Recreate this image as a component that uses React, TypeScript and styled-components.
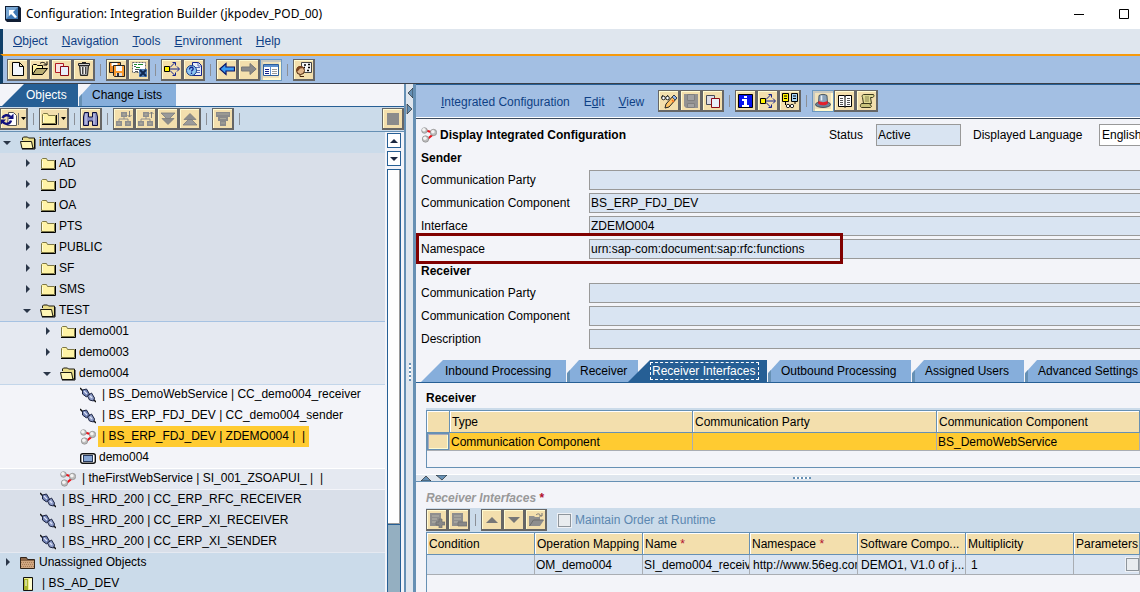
import React from "react";
import styled, { createGlobalStyle, css } from "styled-components";

const GlobalStyle = createGlobalStyle`
  *, *::before, *::after { box-sizing: border-box; }
  body { margin: 0; background: #f3f4f9; }
  button, input, select { font: inherit; color: inherit; }
  ul { list-style: none; margin: 0; padding: 0; }
`;

/* ---------- icons, each on a 16 x 16 grid ---------- */

const Svg = styled.svg`
  display: block;
  flex: none;
`;

const nodesMark = (
  <>
    <path d="M5 3.500l5 1.500M12.500 7l-6 5" stroke="#f01018" strokeWidth="2.200" />
    {[[3.5, 3.5], [12.5, 5.5], [4.5, 12]].map(([cx, cy], i) => (
      <g key={i}>
        <circle cx={cx} cy={cy} r={i === 0 ? 2.8 : 3.2} fill="#bdbdbd" stroke="#8a8a8a" strokeWidth=".7" />
        <circle cx={cx - 0.6} cy={cy - 0.7} r="1.800" fill="#f4f4f4" />
      </g>
    ))}
  </>
);

const hierarchy = (
  <>
    <path d="M5 1h6v5H5zM0 10h6v5H0zM9 10h6v5H9z" fill="#8e8e8e" />
    <path d="M6.500 2.500h3v2h-3zM1.500 11.500h3v2h-3zM10.500 11.500h3v2h-3z" fill="#a9a698" />
    <path d="M8 6v2M3 10V8h9v2" fill="none" stroke="#8e8e8e" />
  </>
);

const icons: Record<string, React.ReactNode> = {
  app: (
    <>
      <path d="M0 0h14l2 2v14H2l-2-2z" fill="#101d33" />
      <path d="M1 1h12v12H1z" fill="#3f78b4" />
      <path d="M1 1h12L1 13z" fill="#79a7d3" />
      <path d="M4 4h6L8 6l4 5-2 1-4-4-2 2z" fill="#fff" />
    </>
  ),
  page: <path d="M2.500 1.500h7l4 4v9h-11zM9.500 1.500v4h4" fill="#f1f5fc" stroke="#000" />,
  open: (
    <>
      <path d="M.5 13.500v-9l1-1h3l1 1h5v3" fill="#fff3a5" stroke="#000" />
      <path d="M.5 13.500l4-6h11l-5 6z" fill="#b9ad72" stroke="#000" />
      <path d="M8 2.500c2-2 5-1 6 1M15 .5v3.500h-3.500" fill="none" stroke="#000" />
    </>
  ),
  copy: (
    <>
      <path d="M1.500 2.500h8v9h-8z" fill="#dcdce6" stroke="#444a58" />
      <path d="M6.500 5.500h8v9h-8z" fill="#e8effa" stroke="#8c0a14" />
    </>
  ),
  copyRed: (
    <>
      <path d="M1.500 2.500h8v9h-8z" fill="#f7e3e3" stroke="#b01a24" />
      <path d="M6.500 5.500h8v9h-8z" fill="#e8effa" stroke="#8c0a14" />
    </>
  ),
  trash: (
    <>
      <path d="M3.500 4.500h9l-1 10h-7z" fill="#9a9a9a" stroke="#222" />
      <path d="M2.500 2.500h11v2h-11z" fill="#ccc" stroke="#222" />
      <path d="M6 1.500h4" stroke="#222" />
      <path d="M6.500 6v7M9.500 6v7" stroke="#444" />
      <path d="M5.500 6v7M8.500 6v7" stroke="#eee" />
    </>
  ),
  saveAll: (
    <>
      <path d="M.5 1.500h11v10H.5z" fill="#f08b28" stroke="#222" />
      <path d="M2.500 2h6v3h-6z" fill="#fff" />
      <path d="M4.500 4.500h11v11h-10l-1-1z" fill="#f79a30" stroke="#222" />
      <path d="M7 5h6v5H7z" fill="#f4f6fa" />
      <path d="M7 12h6v3H7z" fill="#ddd" />
      <path d="M8 12h2v3H8z" fill="#333" />
    </>
  ),
  cancelEdit: (
    <>
      <path d="M1.500 1.500h13v10h-13z" fill="#fff" stroke="#666" strokeDasharray="2 1" />
      <path d="M3 3.500h3M7 3.500h5M5 6.500h4" stroke="#1b8c2c" />
      <path d="M3 5.500h2M4 8.500h4M4 10.500h3" stroke="#555" />
      <path d="M8 8h8v8H8z" fill="#5583bb" />
      <path d="M9 9l6 6M15 9l-6 6" stroke="#0f2850" strokeWidth="2" />
    </>
  ),
  spread: (
    <>
      <path d="M6 8h9M6 6.500l5-5M6 9.500l5 5M8.500 1.500h3v3M8.500 14.500h3v-3M13 5.500L15.500 8 13 10.500" fill="none" stroke="#13218c" />
      <path d="M.5 5.500h5v5h-5z" fill="#fff200" stroke="#000" />
    </>
  ),
  help: (
    <>
      <path d="M6.500 1.500h6l3 3v10h-9z" fill="#e9eef8" stroke="#13218c" />
      <path d="M12 1.500v3.500h3M9 6.500h5M10 9.500h4M10 11.500h4" stroke="#5a6fb8" />
      <circle cx="5.500" cy="9.500" r="5" fill="#8cc6f4" stroke="#153e86" />
      <path d="M3.500 8.500c0-3.500 4.500-2.500 3.500 0C6.700 9.300 5.500 9.500 5.500 10.500M5.500 11.500v1.500" fill="none" stroke="#13218c" strokeWidth="1.300" />
    </>
  ),
  back: <path d="M.8 8L7 2.500v3.500h8.500v4H7v3.500z" fill="#3a9bf2" stroke="#0a1466" strokeWidth="1.200" />,
  forward: <path d="M15.200 8L9 2.500v3.500H.5v4H9v3.500z" fill="#8a8a8a" stroke="#777" />,
  layout: (
    <>
      <path d="M.5 2.500h15v11H.5z" fill="#fff" stroke="#2b5d9c" />
      <path d="M1 3h14v2H1z" fill="#5b8fce" />
      <path d="M2 7.500h4M2 9.500h4M2 11.500h4" stroke="#13218c" />
      <path d="M7.500 5v8" stroke="#5b8fce" />
      <path d="M9 7.500h5M9 9.500h5M9 11.500h5" stroke="#9a9a9a" />
    </>
  ),
  user: (
    <>
      <path d="M5.500 1.500h10v10h-10z" fill="#f6f6f6" stroke="#444" />
      <path d="M8 4h2M12 3.500h2M8 6.500h1M12 6.500h2M11 9.500h2" stroke="#000" strokeWidth="1.600" />
      <circle cx="4.500" cy="9.500" r="4" fill="#e2b68a" stroke="#4a2408" />
      <path d="M.6 10C0 4 6 4 8 7L4 7.500 2 10z" fill="#7b4420" />
      <path d="M4 13.500V15.500h4" stroke="#4a2408" />
    </>
  ),
  refresh: (
    <>
      <path d="M7.500 1.500h5l3 3v10h-9z" fill="#fff" stroke="#555" />
      <path d="M9.500 6C7 3 2.500 4 1.500 7M1.500 10.500c3 4 7.500 2.500 8.500-1" fill="none" stroke="#10107e" strokeWidth="2.500" />
      <path d="M7 8h5.500V2.500zM0 8.500h5l-5 5z" fill="#10107e" />
    </>
  ),
  folder: (
    <>
      <path d="M1.500 12.500v-9l1-1h4l1 2h7v8z" fill="#fff3a5" stroke="#7e7846" />
      <path d="M1 13.500h14.500V4" fill="none" stroke="#000" />
      <path d="M2.500 11V5" stroke="#fffde0" />
    </>
  ),
  folderOpen: (
    <>
      <path d="M2.500 5V3l1-1h4l1 1h6v10h-12" fill="#e9dd8b" stroke="#1c1b10" />
      <path d="M.5 6.500h11l1.500 7H2z" fill="#fff6b5" stroke="#1c1b10" />
      <path d="M15 4v10H2" fill="none" stroke="#000" />
    </>
  ),
  folderBrown: (
    <>
      <path d="M.5 13.500v-11h6l1 2h7v9z" fill="#8d6748" stroke="#33251b" />
      <path d="M1 6h13v7H1z" fill="#d0a680" />
      <path d="M1 7.500h13M2 9.500h12M1 11.500h13" stroke="#a87d58" strokeDasharray="1 1" />
    </>
  ),
  binoculars: (
    <>
      <path d="M.5 14.500V6l1-4.500h4V6h4V1.500h4l1 4.500v8.500h-5V10h-4v4.500z" fill="#8b8fc4" stroke="#0b0b3a" />
      <path d="M3 3v10M11 3v10" stroke="#d4d6f0" />
    </>
  ),
  treeDown: <>{hierarchy}<path d="M13.500 0v6M11.500 4l2 2 2-2" fill="none" stroke="#7c7c7c" /></>,
  treeUp: <>{hierarchy}<path d="M13.500 7V1M11.500 3l2-2 2 2" fill="none" stroke="#7c7c7c" /></>,
  allDown: (
    <>
      <path d="M1 2h14l-6 6H7z" fill="#9a9a9a" stroke="#7c7c7c" strokeWidth=".8" />
      <path d="M2 7.500h12l-6 6z" fill="#8c8c8c" stroke="#7c7c7c" strokeWidth=".8" />
    </>
  ),
  allUp: (
    <>
      <path d="M1 14h14L9 8H7z" fill="#9a9a9a" stroke="#7c7c7c" strokeWidth=".8" />
      <path d="M2 8.500h12l-6-6z" fill="#8c8c8c" stroke="#7c7c7c" strokeWidth=".8" />
    </>
  ),
  filter: (
    <>
      <path d="M1 1h14v5h-2v4h-2v5H5v-5H3V6H1z" fill="#8a8a8a" />
      <path d="M2 3h12M5 7.500h6M6 12h4" stroke="#a9a79c" />
    </>
  ),
  stop: <path d="M2 2h12v12H2z" fill="#8b8b8b" />,
  edit: (
    <>
      <path d="M0 5l2-3M5 5l2-3" stroke="#222" />
      <circle cx="2.500" cy="5" r="1.800" fill="#fff" stroke="#222" />
      <circle cx="6.500" cy="5" r="1.800" fill="#fff" stroke="#222" />
      <path d="M13 2l3 3-8 9-4 1 1-4z" fill="#ffc566" stroke="#222" />
      <path d="M13 2l3 3-2 2-3-3z" fill="#8db4ec" stroke="#222" strokeWidth=".7" />
      <path d="M11 7l2 2" stroke="#f36b1c" strokeWidth="1.500" />
    </>
  ),
  save: (
    <>
      <path d="M1 1h14v14H3l-2-2z" fill="#929292" />
      <path d="M4.500 1.500h7v6h-7zM4.500 10.500h7v4h-7z" fill="#a1a1a1" stroke="#808080" />
    </>
  ),
  info: (
    <>
      <path d="M.5 1.500h14v13H.5z" fill="#0310ef" stroke="#000" />
      <path d="M6 3h3v2H6zM4 6h5v6h2v2H4v-2h2V8H4z" fill="#fff" />
    </>
  ),
  display: (
    <>
      <path d="M.5 .5h6v8h-6z" fill="#fff200" stroke="#000" />
      <path d="M9.500 .5h6v8h-6z" fill="#a6d3f6" stroke="#000" />
      <path d="M2 3h3M2 5.500h3M11 3h3M11 5.500h3M3.500 9v3M13 9v2" stroke="#000" />
      <circle cx="6" cy="13" r="1.700" fill="#fff" stroke="#222" />
      <circle cx="10" cy="13" r="1.700" fill="#fff" stroke="#222" />
    </>
  ),
  hat: (
    <>
      <ellipse cx="8" cy="11.500" rx="7.600" ry="3" fill="#6b8098" stroke="#1d2c3c" strokeWidth=".7" />
      <path d="M4 2.500c2-1.500 6-1.500 8 0l.5 7.500c-3 2-6 2-9 0z" fill="#8ba3ba" stroke="#1d2c3c" strokeWidth=".7" />
      <path d="M3.500 8c3 1.500 6 1.500 9 0l.3 2.800c-3 2-6.500 2-9.600 0z" fill="#e3202c" />
      <path d="M6.500 2.500v5" stroke="#e6eef5" strokeWidth="1.600" />
    </>
  ),
  book: (
    <>
      <path d="M1.500 2.500h6l.5 1 .5-1h6v11h-6l-.5 1-.5-1h-6z" fill="#fff" stroke="#000" />
      <path d="M8 3v11" stroke="#000" />
      <path d="M3 5.500h3M3 7.500h3M3 9.500h3M3 11.500h3M10 5.500h3M10 7.500h3M10 9.500h3M10 11.500h3" stroke="#555" />
    </>
  ),
  scroll: (
    <>
      <path d="M4.500 1.500h10c1 1 0 3-1 3h-2l1 6h-8l-1-6c-1-1 0-3 1-3z" fill="#ded993" stroke="#3b391c" />
      <path d="M2.500 10.500h8l2 3-1 1h-9c-2-1-1-3 0-4z" fill="#c9c37c" stroke="#3b391c" />
      <path d="M6 4h4M6 6h4M6 8h4" stroke="#8b8650" />
    </>
  ),
  rowAdd: (
    <>
      <path d="M1 1h11v13H1z" fill="#8e8e8e" />
      <path d="M3 4h7M3 7h5M3 10h4" stroke="#b8b6ab" />
      <path d="M10 7h3v3h3v3h-3v3h-3v-3H7v-3h3z" fill="#888" stroke="#6d6d6d" strokeWidth=".7" />
    </>
  ),
  rowRemove: (
    <>
      <path d="M1 1h11v13H1z" fill="#8e8e8e" />
      <path d="M3 4h7M3 7h7M3 10h4" stroke="#b8b6ab" />
      <path d="M7 10h9v4H7z" fill="#888" stroke="#6d6d6d" strokeWidth=".7" />
    </>
  ),
  up: <path d="M8 5l6 6H2z" fill="#777" />,
  down: <path d="M8 11L2 5h12z" fill="#777" />,
  openGrey: (
    <>
      <path d="M1 14V4h5l1 1h5v3h4l-4 6z" fill="#8e8e8e" />
      <path d="M1.500 14l4-6h10" fill="none" stroke="#6d6d6d" />
      <path d="M8 3c2-2 4-1 5 1M11 4h3V1" fill="none" stroke="#777" />
    </>
  ),
  channel: (
    <>
      <path d="M0 1l4 4M12 11l4 4" stroke="#111" strokeWidth="1.500" />
      <path d="M2.500 3l4-1 3 5-3 3-4-3z" fill="#7181b4" stroke="#1b2340" />
      <path d="M7.500 9l4-3 3 5-1 3-4-1z" fill="#8e9cc8" stroke="#1b2340" />
      <path d="M4 4l3 3M10 9l2 2" stroke="#dce2f5" strokeWidth="1.300" />
    </>
  ),
  nodes: nodesMark,
  scenario: (
    <>
      <rect x=".7" y="3.700" width="14.600" height="9.600" rx="2" fill="#fff" stroke="#111" strokeWidth="1.400" />
      <rect x="3.500" y="5.500" width="9" height="6" fill="#86a5d3" stroke="#26375a" />
    </>
  ),
  system: (
    <>
      <path d="M3.500 1.500h9v13h-9z" fill="#f1ee8d" stroke="#111" />
      <path d="M4 3h4v11H4z" fill="#a9b52c" />
      <path d="M5 5h2M5 7h2M5 9h2" stroke="#fff" />
      <path d="M9 3h3v10H9z" fill="#fffdd1" />
    </>
  ),
};

const Icon = ({ name }: { name: string }) => (
  <Svg width="16" height="16" viewBox="0 0 16 16" fill="none" aria-hidden="true">
    {icons[name]}
  </Svg>
);

/* ---------- window frame ---------- */

const Window = styled.div`
  display: flex;
  flex-direction: column;
  height: 100vh;
  overflow: hidden;
  font: 12px/16px "Liberation Sans", Arial, sans-serif;
  color: #000;
  white-space: nowrap;
`;

const TitleBar = styled.header`
  display: flex;
  align-items: center;
  height: 29px;
  padding: 0 10px 2px 5px;
  gap: 5px;
  background: #fff;
`;

const WindowTitle = styled.h1`
  flex: 1;
  margin: 0;
  font: 12px/18px "Noto Sans", "Open Sans", sans-serif;
`;

const CaptionButton = styled.button`
  display: flex;
  padding: 0;
  margin-left: 28px;
  border: 0;
  background: none;
`;

const MenuBar = styled.nav`
  display: flex;
  align-items: center;
  gap: 14px;
  height: 25px;
  padding: 0 0 2px 10px;
  border-left: 3px solid #0f3f68;
  background: #dfe6ee;
`;

const MenuItem = styled.button`
  padding: 0;
  border: 0;
  background: none;
  color: #0f3f85;
`;

const Mnemonic = styled.span`
  text-decoration: underline;
`;

const MainToolbar = styled.div`
  display: flex;
  align-items: center;
  height: 30px;
  padding-left: 4px;
  border-left: 3px solid #0f3f68;
  border-top: 2px solid #f79a0c;
  border-bottom: 1px solid #3b3f48;
  background: #a3bfe3;
`;

const Separator = styled.span`
  width: 1px;
  height: 12px;
  margin: 0 5px;
  background: #8b8f96;
`;

const ToolButton = styled.button<{ $active?: boolean; $width?: number }>`
  display: flex;
  align-items: center;
  justify-content: center;
  flex: none;
  width: ${(p) => p.$width || 22}px;
  height: 22px;
  padding: 0;
  border: solid #666;
  border-width: 1px 2px 2px 1px;
  background: #f3dfad;
  box-shadow: inset 1px 1px #fffbd2;
  ${(p) => p.$active && css`
    border: 1px solid #6c98c0;
    background: #f0e2bc;
    box-shadow: inset 2px 2px #c9c9c0, inset -2px -2px #fff9cf;
  `}
`;

const DropMark = styled.span`
  display: flex;
  align-items: center;
  height: 12px;
  margin-left: 1px;
  padding-left: 2px;
  border-left: 1px solid #777;
`;

const DropArrow = () => (
  <DropMark>
    <Svg width="5" height="3" viewBox="0 0 5 3" aria-hidden="true"><path d="M0 0h5L2.500 3z" fill="#000" /></Svg>
  </DropMark>
);

type Tool = string | null;

const Tools = ({ items, active }: { items: Tool[]; active?: string }) => (
  <>
    {items.map((name, i) =>
      name === null ? (
        <Separator key={i} />
      ) : (
        <ToolButton key={i} aria-label={name} $active={name === active}>
          <Icon name={name} />
        </ToolButton>
      )
    )}
  </>
);

const Panes = styled.main`
  display: grid;
  grid-template-columns: 406px 7px minmax(0, 1fr);
  flex: 1;
  min-height: 0;
`;

/* ---------- tabs ---------- */

const TabStrip = styled.div<{ $indent: number }>`
  display: flex;
  flex: none;
  height: 23px;
  padding-left: ${(p) => p.$indent}px;
  border-bottom: 1px solid #265f95;
`;

const Tab = styled.button<{ $width: number; $active?: boolean; $first?: boolean; $overlap?: boolean }>`
  flex: none;
  width: ${(p) => p.$width}px;
  margin: 0 0 0 ${(p) => (p.$overlap ? -10 : 1)}px;
  padding: 0 10px 0 ${(p) => (p.$active || p.$first ? 24 : 13)}px;
  border: 0;
  text-align: left;
  background: ${(p) =>
    p.$first
      ? "#86aedb"
      : "linear-gradient(#6690b4, #6690b4) left bottom / 3px 12px no-repeat, #86aedb"};
  clip-path: ${(p) =>
    p.$first || p.$active
      ? "polygon(0 100%, 22px 0, 100% 0, 100% 100%)"
      : "polygon(0 60%, 12px 0, 100% 0, 100% 100%, 0 100%)"};
  ${(p) => p.$active && css`
    background: #265f95;
    color: #fff;
    z-index: 1;
  `}
`;

const FocusLabel = styled.span`
  display: block;
  width: 109px;
  height: 18px;
  margin-left: -2px;
  padding: 0 1px;
  border: 1px dashed #fff;
`;

/* ---------- object tree ---------- */

const Side = styled.section`
  display: flex;
  flex-direction: column;
  min-height: 0;
  border-right: 2px solid #6690b4;
  background: #f3f4f9;
`;

const TreeToolbar = styled.div`
  display: flex;
  align-items: center;
  flex: none;
  height: 25px;
  border-bottom: 1px solid #6690b4;
  background: #cbdbea;
`;

const Spacer = styled.span`
  flex: 1;
`;

const TreeArea = styled.div`
  display: flex;
  flex: 1;
  min-height: 0;
`;

const Tree = styled.ul`
  flex: 1;
  min-width: 0;
  overflow: hidden;
  background: #d9dfe9;
`;

const levelColors = ["#cbdbea", "#d9dfe9", "#e5e9f1", "#f3f4f9"];

const Row = styled.li<{ $level: number; $edge?: string }>`
  display: flex;
  align-items: center;
  height: 21px;
  padding-left: ${(p) => p.$level * 20}px;
  background: ${(p) => levelColors[p.$level]};
  box-shadow: inset 0 1px ${(p) => p.$edge || levelColors[p.$level]};
`;

const Twisty = styled.span`
  width: 20px;
  padding-left: 3px;
`;

const RowLabel = styled.span<{ $path?: boolean; $selected?: boolean }>`
  height: 21px;
  margin-left: 2px;
  padding: 2px ${(p) => (p.$path ? 4 : 1)}px;
  white-space: pre;
  background: ${(p) => (p.$selected ? "#ffcb31" : "transparent")};
`;

const Arrow = ({ open }: { open: boolean }) => (
  <Svg width="9" height="9" viewBox="0 0 9 9" aria-hidden="true">
    <path d={open ? "M0 3h8L4 7z" : "M3 0v8l4-4z"} fill="#2a3648" />
  </Svg>
);

interface Item {
  level: number;
  icon: string;
  text: string;
  open?: boolean;
  edge?: string;
  selected?: boolean;
}

const items: Item[] = [
  { level: 0, icon: "folderOpen", text: "interfaces", open: true },
  { level: 1, icon: "folder", text: "AD", open: false },
  { level: 1, icon: "folder", text: "DD", open: false },
  { level: 1, icon: "folder", text: "OA", open: false },
  { level: 1, icon: "folder", text: "PTS", open: false },
  { level: 1, icon: "folder", text: "PUBLIC", open: false },
  { level: 1, icon: "folder", text: "SF", open: false },
  { level: 1, icon: "folder", text: "SMS", open: false },
  { level: 1, icon: "folderOpen", text: "TEST", open: true },
  { level: 2, icon: "folder", text: "demo001", open: false, edge: "#a6c2e2" },
  { level: 2, icon: "folder", text: "demo003", open: false },
  { level: 2, icon: "folderOpen", text: "demo004", open: true },
  { level: 3, icon: "channel", text: "| BS_DemoWebService | CC_demo004_receiver", edge: "#c3d6ea" },
  { level: 3, icon: "channel", text: "| BS_ERP_FDJ_DEV | CC_demo004_sender" },
  { level: 3, icon: "nodes", text: "| BS_ERP_FDJ_DEV | ZDEMO004 |  |", selected: true },
  { level: 3, icon: "scenario", text: "demo004" },
  { level: 2, icon: "nodes", text: "| theFirstWebService | SI_001_ZSOAPUI_ |  |", edge: "#fff" },
  { level: 1, icon: "channel", text: "| BS_HRD_200 | CC_ERP_RFC_RECEIVER", edge: "#f3f4f9" },
  { level: 1, icon: "channel", text: "| BS_HRD_200 | CC_ERP_XI_RECEIVER" },
  { level: 1, icon: "channel", text: "| BS_HRD_200 | CC_ERP_XI_SENDER" },
  { level: 0, icon: "folderBrown", text: "Unassigned Objects", open: false, edge: "#e5e9f1" },
  { level: 0, icon: "system", text: "| BS_AD_DEV" },
];

const ScrollBar = styled.div`
  display: flex;
  flex-direction: column;
  align-items: stretch;
  gap: 3px;
  width: 19px;
  padding: 1px 3px 0 2px;
  background: #f3f4f9;
`;

const ScrollStep = styled.button`
  display: flex;
  align-items: center;
  justify-content: center;
  flex: none;
  height: 15px;
  padding: 0;
  border: 1px solid #265f95;
  background: #fff;
`;

const ScrollTrack = styled.div`
  flex: 1;
  border: 1px solid #265f95;
  border-bottom: 0;
  background: #94afc1;
`;

const ScrollThumb = styled.div`
  height: 84%;
  border: solid #9a9a9a;
  border-width: 0 1px 1px 0;
  background: #fff;
  box-shadow: 0 1px #265f95;
`;

/* ---------- pane splitters ---------- */

const SideSplitter = styled.div`
  display: flex;
  flex-direction: column;
  align-items: center;
  gap: 249px;
  padding: 4px 0 0;
  background: #dfe6ee;
`;

const SplitArrows = styled.div`
  display: grid;
  gap: 6px;
`;

const dots = "repeating-linear-gradient(VAR, #6690b4 0 2px, #fff 2px 4px)";

const SideGrip = styled.span`
  width: 2px;
  height: 18px;
  background: ${dots.replace("VAR", "to bottom")};
`;

const RowSplitter = styled.div`
  display: flex;
  align-items: center;
  flex: none;
  gap: 16px;
  height: 8px;
  padding-left: 4px;
  border-top: 1px solid #fff;
  border-bottom: 1px solid #6690b4;
  background: #dfe6ee;
`;

const RowGrip = styled.span`
  width: 18px;
  height: 2px;
  margin: 0 auto;
  background: ${dots.replace("VAR", "to right")};
`;

/* ---------- configuration editor ---------- */

const Editor = styled.section`
  display: flex;
  flex-direction: column;
  min-width: 0;
  overflow: hidden;
  border-left: 3px solid #6690b4;
  background: #f3f4f9;
`;

const EditorBar = styled.div`
  display: flex;
  align-items: center;
  flex: none;
  height: 35px;
  padding-left: 25px;
  border-bottom: 1px solid #3b4a5c;
  box-shadow: inset 0 -1px #fff, inset 0 1px #265f95;
  background: #a3bfe3;
`;

const EditorMenu = styled.nav`
  display: flex;
  gap: 14px;
  width: 217px;
  padding-top: 2px;
`;

const Head = styled.div`
  display: flex;
  align-items: center;
  flex: none;
  height: 30px;
  margin-top: 1px;
  padding-left: 5px;
  overflow: hidden;
`;

const HeadTitle = styled.h2`
  flex: none;
  width: 389px;
  margin: 0 0 0 3px;
  font: bold 12px/16px "Liberation Sans", Arial, sans-serif;
`;

const StatusLabel = styled.label`
  flex: none;
  width: 35px;
`;

const StatusField = styled.input`
  flex: none;
  width: 85px;
  height: 22px;
  margin: 0 12px;
  padding: 0 1px;
  border: 1px solid #999;
  background: #d9e4f2;
`;

const LanguageLabel = styled.label`
  flex: none;
  width: 114px;
  margin-right: 12px;
`;

const LanguageSelect = styled.select`
  flex: none;
  width: 120px;
  height: 22px;
  padding: 0 2px;
  border: 1px solid #999;
  appearance: none;
  background: #fff;
`;

const Caption = styled.h3<{ $inset?: boolean }>`
  flex: none;
  margin: 0;
  padding-left: ${(p) => (p.$inset ? 10 : 5)}px;
  font: bold 12px/16px "Liberation Sans", Arial, sans-serif;
`;

const TabCaption = styled(Caption)`
  margin-top: 7px;
`;

const Fields = styled.div`
  position: relative;
  display: grid;
  flex: none;
  gap: 3px;
  padding: 4px 0;
`;

const FieldRow = styled.div`
  display: flex;
  align-items: center;
  height: 20px;
  padding-left: 5px;
`;

const FieldLabel = styled.label`
  flex: none;
  width: 168px;
`;

const FieldInput = styled.input`
  flex: 1;
  min-width: 0;
  height: 20px;
  padding: 0 1px;
  border: 1px solid #999;
  border-right: 0;
  background: #d9e4f2;
`;

const Highlight = styled.span`
  position: absolute;
  left: 0;
  bottom: -1px;
  width: 427px;
  height: 31px;
  border: 3px solid #800000;
  pointer-events: none;
`;

const Field = ({ id, label, value = "" }: { id: string; label: string; value?: string }) => (
  <FieldRow>
    <FieldLabel htmlFor={id}>{label}</FieldLabel>
    <FieldInput id={id} readOnly value={value} />
  </FieldRow>
);

const EditorTabs = styled(TabStrip)`
  margin-top: 7px;
`;

const TableFrame = styled.div`
  flex: none;
  height: 58px;
  margin: 4px 0 6px 10px;
  border: solid #6690b4;
  border-width: 1px 0 1px 1px;
  box-shadow: 0 -2px #cbdbea;
`;

const Table = styled.table`
  width: 100%;
  table-layout: fixed;
  border-collapse: separate;
  border-spacing: 0;
`;

const Th = styled.th<{ $width?: number }>`
  width: ${(p) => (p.$width ? `${p.$width}px` : "auto")};
  height: 22px;
  padding: 0 0 0 2px;
  overflow: hidden;
  text-align: left;
  font-weight: normal;
  border-right: 1px solid #6690b4;
  border-bottom: 1px solid #6690b4;
  background: #f3dfad;
  box-shadow: inset 1px 1px #fff;
`;

const Td = styled.td<{ $selected?: boolean; $pad?: number }>`
  height: ${(p) => (p.$selected ? 18 : 20)}px;
  padding: 0 0 0 ${(p) => p.$pad || 1}px;
  overflow: hidden;
  border-right: 1px solid #a9adb3;
  border-bottom: 1px solid #a9adb3;
  background: ${(p) => (p.$selected ? "#ffcb31" : "#d9e4f2")};
`;

const RowSelector = styled.button`
  display: block;
  width: 22px;
  height: 17px;
  padding: 0;
  border: 1px solid #6690b4;
  background: #f3dfad;
  box-shadow: inset 1px 1px #aab, inset -1px -1px #fffbd2;
`;

const SelectorCell = styled(Td)`
  padding: 0;
  background: #f3dfad;
`;

const DisabledTitle = styled(Caption)`
  margin: 8px 0 2px;
  color: #999;
  font-style: italic;
`;

const Required = styled.span`
  color: #b0102c;
  font-style: normal;
`;

const TableToolbar = styled.div`
  display: flex;
  align-items: center;
  flex: none;
  height: 24px;
  margin-left: 10px;
  background: #cbdbea;
`;

const CheckLabel = styled.label`
  display: flex;
  align-items: center;
  gap: 4px;
  margin-left: 11px;
  color: #5b87b0;
`;

const CheckBox = styled.input`
  appearance: none;
  width: 13px;
  height: 13px;
  margin: 0;
  border: 1px solid #8e959c;
  outline: 1px solid #eef1f6;
  background: #e9ecef;
`;

const ParamCheck = styled(CheckBox)`
  display: block;
  margin-left: 47px;
`;

const MappingFrame = styled.div`
  flex: 1;
  margin-left: 10px;
  border: solid #6690b4;
  border-width: 1px 0 0 1px;
`;

const Corner = ({ d }: { d: string }) => (
  <Svg width="7" height="10" viewBox="0 0 7 10" aria-hidden="true">
    <path d={d} fill="#6690b4" stroke="#111" strokeWidth=".6" />
  </Svg>
);

export default function App() {
  return (
    <Window>
      <GlobalStyle />
      <TitleBar>
        <Icon name="app" />
        <WindowTitle>Configuration: Integration Builder (jkpodev_POD_00)</WindowTitle>
        <CaptionButton aria-label="Minimize">
          <Svg width="12" height="12" viewBox="0 0 12 12"><path d="M1 6.500h10" stroke="#000" /></Svg>
        </CaptionButton>
        <CaptionButton aria-label="Maximize">
          <Svg width="12" height="12" viewBox="0 0 12 12"><path d="M1.500 1.500h9v9h-9z" fill="none" stroke="#000" /></Svg>
        </CaptionButton>
      </TitleBar>
      <MenuBar>
        {["Object", "Navigation", "Tools", "Environment", "Help"].map((m) => (
          <MenuItem key={m}><Mnemonic>{m[0]}</Mnemonic>{m.slice(1)}</MenuItem>
        ))}
      </MenuBar>
      <MainToolbar>
        <Tools
          active="layout"
          items={["page", "open", "copyRed", "trash", null, "saveAll", "cancelEdit", null, "spread", "help", null, "back", "forward", "layout", null, "user"]}
        />
      </MainToolbar>

      <Panes>
        <Side>
          <TabStrip $indent={1}>
            <Tab $width={76} $active>Objects</Tab>
            <Tab $width={97}>Change Lists</Tab>
          </TabStrip>
          <TreeToolbar>
            <ToolButton $width={28} aria-label="Refresh"><Icon name="refresh" /><DropArrow /></ToolButton>
            <Separator />
            <ToolButton $width={30} aria-label="New folder"><Icon name="folder" /><DropArrow /></ToolButton>
            <Separator />
            <Tools items={["binoculars", null, "treeDown", "treeUp", "allDown", "allUp", null, "filter", null]} />
            <Spacer />
            <Tools items={["stop"]} />
          </TreeToolbar>
          <TreeArea>
            <Tree>
              {items.map((it, i) => (
                <Row key={i} $level={it.level} $edge={it.edge}>
                  <Twisty>{it.open !== undefined && <Arrow open={it.open} />}</Twisty>
                  <Icon name={it.icon} />
                  <RowLabel $path={it.text.startsWith("|")} $selected={it.selected}>{it.text}</RowLabel>
                </Row>
              ))}
            </Tree>
            <ScrollBar>
              <ScrollStep aria-label="Scroll up">
                <Svg width="8" height="4" viewBox="0 0 8 4"><path d="M4 0l4 4H0z" fill="#1b2740" /></Svg>
              </ScrollStep>
              <ScrollStep aria-label="Scroll down">
                <Svg width="8" height="4" viewBox="0 0 8 4"><path d="M4 4L0 0h8z" fill="#1b2740" /></Svg>
              </ScrollStep>
              <ScrollTrack><ScrollThumb /></ScrollTrack>
            </ScrollBar>
          </TreeArea>
        </Side>

        <SideSplitter>
          <SplitArrows>
            <Corner d="M7 0v10L2 5z" />
            <Corner d="M1 0v10l5-5z" />
          </SplitArrows>
          <SideGrip />
        </SideSplitter>

        <Editor>
          <EditorBar>
            <EditorMenu>
              <MenuItem><Mnemonic>I</Mnemonic>ntegrated Configuration</MenuItem>
              <MenuItem>E<Mnemonic>d</Mnemonic>it</MenuItem>
              <MenuItem><Mnemonic>V</Mnemonic>iew</MenuItem>
            </EditorMenu>
            <Tools active="hat" items={["edit", "save", "copy", null, "info", "spread", "display", null, "hat", "book", "scroll"]} />
          </EditorBar>
          <Head>
            <Icon name="nodes" />
            <HeadTitle>Display Integrated Configuration</HeadTitle>
            <StatusLabel htmlFor="status">Status</StatusLabel>
            <StatusField id="status" readOnly value="Active" />
            <LanguageLabel htmlFor="language">Displayed Language</LanguageLabel>
            <LanguageSelect id="language"><option>English</option></LanguageSelect>
          </Head>
          <Caption>Sender</Caption>
          <Fields>
            <Field id="s-party" label="Communication Party" />
            <Field id="s-comp" label="Communication Component" value="BS_ERP_FDJ_DEV" />
            <Field id="s-if" label="Interface" value="ZDEMO004" />
            <Field id="s-ns" label="Namespace" value="urn:sap-com:document:sap:rfc:functions" />
            <Highlight />
          </Fields>
          <Caption>Receiver</Caption>
          <Fields>
            <Field id="r-party" label="Communication Party" />
            <Field id="r-comp" label="Communication Component" />
            <Field id="r-desc" label="Description" />
          </Fields>
          <EditorTabs $indent={4}>
            <Tab $width={145} $first>Inbound Processing</Tab>
            <Tab $width={71}>Receiver</Tab>
            <Tab $width={139} $active $overlap><FocusLabel>Receiver Interfaces</FocusLabel></Tab>
            <Tab $width={143}>Outbound Processing</Tab>
            <Tab $width={112}>Assigned Users</Tab>
            <Tab $width={140}>Advanced Settings</Tab>
          </EditorTabs>
          <TabCaption $inset>Receiver</TabCaption>
          <TableFrame>
            <Table>
              <thead>
                <tr>
                  <Th $width={23} aria-label="Selection" />
                  <Th $width={243}>Type</Th>
                  <Th $width={244}>Communication Party</Th>
                  <Th>Communication Component</Th>
                </tr>
              </thead>
              <tbody>
                <tr>
                  <SelectorCell $selected><RowSelector aria-label="Select row" /></SelectorCell>
                  <Td $selected>Communication Component</Td>
                  <Td $selected />
                  <Td $selected>BS_DemoWebService</Td>
                </tr>
              </tbody>
            </Table>
          </TableFrame>
          <RowSplitter>
            <Svg width="28" height="6" viewBox="0 0 28 6">
              <path d="M1 6l5-5 5 5zM16 0h11l-5 5z" fill="#6690b4" stroke="#111" strokeWidth=".6" />
            </Svg>
            <RowGrip />
          </RowSplitter>
          <DisabledTitle $inset>Receiver Interfaces <Required>*</Required></DisabledTitle>
          <TableToolbar>
            <Tools items={["rowAdd", "rowRemove", null, "up", "down", "openGrey"]} />
            <CheckLabel>
              <CheckBox type="checkbox" disabled />
              Maintain Order at Runtime
            </CheckLabel>
          </TableToolbar>
          <MappingFrame>
            <Table>
              <thead>
                <tr>
                  <Th $width={108}>Condition</Th>
                  <Th $width={108}>Operation Mapping</Th>
                  <Th $width={107}>Name <Required>*</Required></Th>
                  <Th $width={108}>Namespace <Required>*</Required></Th>
                  <Th $width={108}>Software Compo...</Th>
                  <Th $width={108}>Multiplicity</Th>
                  <Th>Parameters</Th>
                </tr>
              </thead>
              <tbody>
                <tr>
                  <Td />
                  <Td>OM_demo004</Td>
                  <Td>SI_demo004_receiver</Td>
                  <Td $pad={3}>http://www.56eg.com</Td>
                  <Td $pad={3}>DEMO1, V1.0 of j...</Td>
                  <Td $pad={5}>1</Td>
                  <Td $pad={5}><ParamCheck type="checkbox" aria-label="Parameters" /></Td>
                </tr>
              </tbody>
            </Table>
          </MappingFrame>
        </Editor>
      </Panes>
    </Window>
  );
}
